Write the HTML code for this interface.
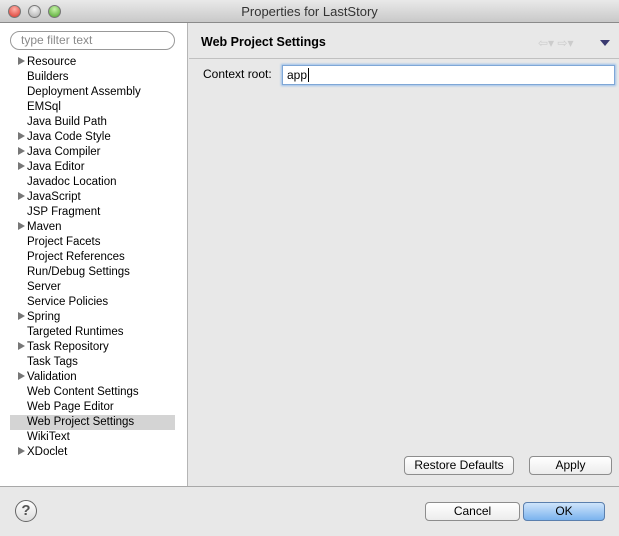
<!DOCTYPE html>
<html><head><style>
*{margin:0;padding:0;box-sizing:border-box}
body{width:619px;height:536px;overflow:hidden;font-family:"Liberation Sans",sans-serif;font-size:11.5px;color:#000;background:#e8e8e8;position:relative}
.title{position:absolute;left:0;top:0;width:619px;height:23px;background:linear-gradient(#e9e9e9,#c9c9c9);border-bottom:1px solid #8a8a8a;text-align:center;font-size:13px;line-height:24px;color:#333}
.dot{position:absolute;top:5px;width:13px;height:13px;border-radius:50%;border:1px solid #777}
.left{position:absolute;left:0;top:23px;width:188px;height:463px;background:#fff;border-right:1px solid #b5b5b5}
.filter{position:absolute;left:10px;top:8px;width:165px;height:19px;border:1px solid #999;border-radius:10px;color:#8a8a8a;font-size:12px;line-height:17px;padding-left:10px}
.item{position:absolute;left:27px;height:15px;line-height:15px;white-space:nowrap}
.arr{position:absolute;left:18px;width:0;height:0;border-left:7px solid #777;border-top:4.5px solid transparent;border-bottom:4.5px solid transparent}
.sel{position:absolute;left:10px;top:392px;width:165px;height:15px;background:#d4d4d4}
.hdr{position:absolute;left:201px;top:35px;font-weight:bold;font-size:12.5px}
.hline{position:absolute;left:189px;top:58px;width:430px;height:1px;background:#c0c0c0}
.btn{position:absolute;height:19px;border:1px solid #8d8d8d;border-radius:4px;background:linear-gradient(#fff,#ececec);text-align:center;line-height:17px;font-size:12px}
.bline{position:absolute;left:0;top:486px;width:619px;height:1px;background:#a8a8a8}
</style></head><body>
<div class="title">Properties for LastStory
<div class="dot" style="left:8px;background:radial-gradient(circle at 50% 30%,#ffb0a8,#d8352a)"></div>
<div class="dot" style="left:28px;background:radial-gradient(circle at 50% 30%,#f4f4f4,#aaa)"></div>
<div class="dot" style="left:48px;background:radial-gradient(circle at 50% 30%,#c6f3a8,#4da32a)"></div>
</div>
<div class="left">
<div class="filter">type filter text</div>
<div class="sel"></div>
</div>
<div style="position:absolute;left:0;top:23px">
</div>
<div id="tree"></div>
<div class="arr" style="top:57px"></div><div class="item" style="top:55px">Resource</div>
<div class="item" style="top:70px">Builders</div>
<div class="item" style="top:85px">Deployment Assembly</div>
<div class="item" style="top:100px">EMSql</div>
<div class="item" style="top:115px">Java Build Path</div>
<div class="arr" style="top:132px"></div><div class="item" style="top:130px">Java Code Style</div>
<div class="arr" style="top:147px"></div><div class="item" style="top:145px">Java Compiler</div>
<div class="arr" style="top:162px"></div><div class="item" style="top:160px">Java Editor</div>
<div class="item" style="top:175px">Javadoc Location</div>
<div class="arr" style="top:192px"></div><div class="item" style="top:190px">JavaScript</div>
<div class="item" style="top:205px">JSP Fragment</div>
<div class="arr" style="top:222px"></div><div class="item" style="top:220px">Maven</div>
<div class="item" style="top:235px">Project Facets</div>
<div class="item" style="top:250px">Project References</div>
<div class="item" style="top:265px">Run/Debug Settings</div>
<div class="item" style="top:280px">Server</div>
<div class="item" style="top:295px">Service Policies</div>
<div class="arr" style="top:312px"></div><div class="item" style="top:310px">Spring</div>
<div class="item" style="top:325px">Targeted Runtimes</div>
<div class="arr" style="top:342px"></div><div class="item" style="top:340px">Task Repository</div>
<div class="item" style="top:355px">Task Tags</div>
<div class="arr" style="top:372px"></div><div class="item" style="top:370px">Validation</div>
<div class="item" style="top:385px">Web Content Settings</div>
<div class="item" style="top:400px">Web Page Editor</div>
<div class="item" style="top:415px">Web Project Settings</div>
<div class="item" style="top:430px">WikiText</div>
<div class="arr" style="top:447px"></div><div class="item" style="top:445px">XDoclet</div>
<div class="hdr">Web Project Settings</div>
<div style="position:absolute;left:538px;top:36px;color:#ccc;font-size:12px">⇦▾ ⇨▾</div>
<div style="position:absolute;left:600px;top:40px;width:0;height:0;border-top:6px solid #3a3a70;border-left:5px solid transparent;border-right:5px solid transparent"></div>
<div class="hline"></div>
<div style="position:absolute;left:203px;top:67px;font-size:12px">Context root:</div>
<div style="position:absolute;left:282px;top:65px;width:333px;height:20px;background:#fff;border:1px solid #7fa7d6;box-shadow:0 0 2px 1px #9bc0ea;font-size:12px;line-height:18px;padding-left:4px">app<span style="border-left:1px solid #000;margin-left:1px"></span></div>
<div class="btn" style="left:404px;top:456px;width:110px">Restore Defaults</div>
<div class="btn" style="left:529px;top:456px;width:83px">Apply</div>
<div class="bline"></div>
<div style="position:absolute;left:15px;top:500px;width:22px;height:22px;border-radius:50%;border:1.5px solid #666;background:linear-gradient(#fff,#ddd);text-align:center;line-height:19px;font-size:15px;color:#555;font-weight:bold">?</div>
<div class="btn" style="left:425px;top:502px;width:95px">Cancel</div>
<div class="btn" style="left:523px;top:502px;width:82px;background:linear-gradient(#cfe4fb,#7bb3ee);border-color:#5b7fad">OK</div>
</body></html>
